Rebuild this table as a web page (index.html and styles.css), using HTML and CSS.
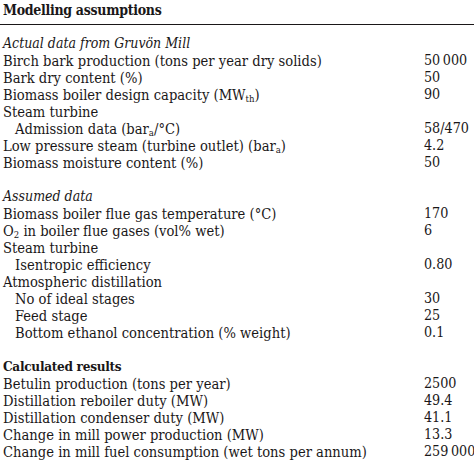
FILE: index.html
```html
<!DOCTYPE html>
<html>
<head>
<meta charset="utf-8">
<link rel="stylesheet" href="styles.css">
</head>
<body>
<div class="table">
  <div class="title">Modelling assumptions</div>
  <div class="rows">
    <div class="row"><span class="label section">Actual data from Gruvön Mill</span><span class="val"></span></div>
    <div class="row"><span class="label">Birch bark production (tons per year dry solids)</span><span class="val">50&#8201;000</span></div>
    <div class="row"><span class="label">Bark dry content (%)</span><span class="val">50</span></div>
    <div class="row"><span class="label">Biomass boiler design capacity (MW<sub>th</sub>)</span><span class="val">90</span></div>
    <div class="row"><span class="label">Steam turbine</span><span class="val"></span></div>
    <div class="row"><span class="label indent">Admission data (bar<sub>a</sub>/°C)</span><span class="val">58/470</span></div>
    <div class="row"><span class="label">Low pressure steam (turbine outlet) (bar<sub>a</sub>)</span><span class="val">4.2</span></div>
    <div class="row"><span class="label">Biomass moisture content (%)</span><span class="val">50</span></div>
    <div class="row blank"></div>
    <div class="row"><span class="label section">Assumed data</span><span class="val"></span></div>
    <div class="row"><span class="label">Biomass boiler flue gas temperature (°C)</span><span class="val">170</span></div>
    <div class="row"><span class="label">O<sub>2</sub> in boiler flue gases (vol% wet)</span><span class="val">6</span></div>
    <div class="row"><span class="label">Steam turbine</span><span class="val"></span></div>
    <div class="row"><span class="label indent">Isentropic efficiency</span><span class="val">0.80</span></div>
    <div class="row"><span class="label">Atmospheric distillation</span><span class="val"></span></div>
    <div class="row"><span class="label indent">No of ideal stages</span><span class="val">30</span></div>
    <div class="row"><span class="label indent">Feed stage</span><span class="val">25</span></div>
    <div class="row"><span class="label indent">Bottom ethanol concentration (% weight)</span><span class="val">0.1</span></div>
    <div class="row blank"></div>
    <div class="row"><span class="label heading">Calculated results</span><span class="val"></span></div>
    <div class="row"><span class="label">Betulin production (tons per year)</span><span class="val">2500</span></div>
    <div class="row"><span class="label">Distillation reboiler duty (MW)</span><span class="val">49.4</span></div>
    <div class="row"><span class="label">Distillation condenser duty (MW)</span><span class="val">41.1</span></div>
    <div class="row"><span class="label">Change in mill power production (MW)</span><span class="val">13.3</span></div>
    <div class="row"><span class="label">Change in mill fuel consumption (wet tons per annum)</span><span class="val">259&#8201;000</span></div>
  </div>
</div>
</body>
</html>
```
FILE: styles.css
```css
html, body {
  margin: 0;
  padding: 0;
  background: #ffffff;
}
body {
  font-family: "DejaVu Serif Condensed", "DejaVu Serif", serif;
  font-stretch: condensed;
  font-size: 14.6px;
  color: #1a1718;
  line-height: 17px;
}
.table {
  width: 474px;
}
.title {
  font-weight: bold;
  font-size: 14px;
  letter-spacing: -0.3px;
  padding: 2px 0 5px 3px;
  border-bottom: 1px solid #1a1718;
}
.rows {
  padding-top: 10px;
  padding-left: 3px;
}
.row {
  display: grid;
  grid-template-columns: 421px 1fr;
  height: 17px;
  white-space: nowrap;
}
.val {
  font-size: 14.2px;
}
.section {
  font-style: italic;
  font-size: 14px;
}
.heading {
  font-weight: bold;
  font-size: 13.5px;
  letter-spacing: -0.3px;
}
.indent {
  padding-left: 12px;
}
sub {
  font-size: 0.65em;
  line-height: 0;
  vertical-align: -0.2em;
}
```
